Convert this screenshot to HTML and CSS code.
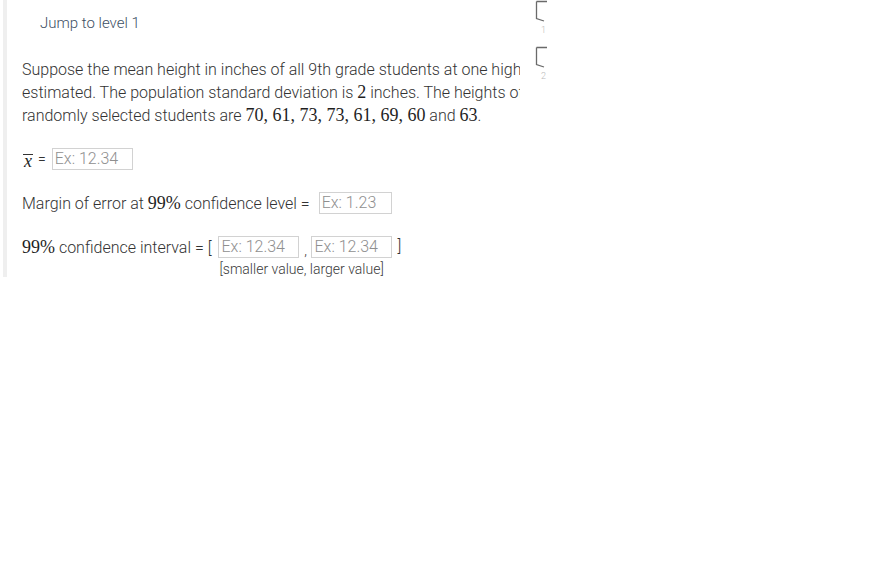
FILE: index.html
```html
<!DOCTYPE html>
<html>
<head>
<meta charset="utf-8">
<link rel="stylesheet" href="styles.css">
</head>
<body>
<div class="page">
  <div class="panel">
    <div class="jump">Jump to level 1</div>
    <div class="question">
      <div class="line">Suppose the mean height in inches of all 9th grade students at one high school is</div>
      <div class="line">estimated. The population standard deviation is <span class="m">2</span> inches. The heights of 8</div>
      <div class="line">randomly selected students are <span class="m">70, 61, 73, 73, 61, 69, 60</span> and <span class="m">63</span>.</div>
    </div>
    <div class="row r1">
      <span class="xbar">x</span><span class="eq">=</span><span class="input w81">Ex: 12.34</span>
    </div>
    <div class="row">
      <span>Margin of error at <span class="m">99%</span> confidence level =</span><span class="input w73 ml8">Ex: 1.23</span>
    </div>
    <div class="row ci">
      <span><span class="m">99%</span> confidence interval = [</span>
      <div class="pair">
        <div class="inputs">
          <span class="input w81">Ex: 12.34</span><span class="comma">,</span><span class="input w81">Ex: 12.34</span><span class="close">]</span>
        </div>
        <div class="hint">[smaller value, larger value]</div>
      </div>
    </div>
  </div>
  <div class="levels">
    <div class="level">
      <svg width="14" height="24" viewBox="0 0 14 24"><path d="M1.5 1.5 H14 M1.5 1.5 V18.5 L9 21" fill="none" stroke="#6a6a6a" stroke-width="1.3"/></svg>
      <span class="lnum">1</span>
    </div>
    <div class="level">
      <svg width="14" height="24" viewBox="0 0 14 24"><path d="M1.5 1.5 H14 M1.5 1.5 V18.5 L9 21" fill="none" stroke="#6a6a6a" stroke-width="1.3"/></svg>
      <span class="lnum">2</span>
    </div>
  </div>
</div>
</body>
</html>
```
FILE: styles.css
```css
html, body {
  margin: 0;
  padding: 0;
  background: #fff;
}
body {
  font-family: Roboto, "Liberation Sans", sans-serif;
  font-weight: 300;
  color: #333;
}
.page {
  display: flex;
  align-items: flex-start;
}
.panel {
  margin-left: 3px;
  border-left: 4px solid #efefef;
  width: 498px;
  padding: 13px 0 0 15px;
  white-space: nowrap;
}
.jump {
  font-size: 15px;
  font-weight: 300;
  line-height: 20px;
  color: #3d4f63;
  padding-left: 18px;
}
.question {
  margin-top: 26px;
  font-size: 16px;
  line-height: 22px;
  width: 498px;
  overflow: hidden;
}
.line {
  white-space: nowrap;
}
.m {
  font-family: "Liberation Serif", "DejaVu Serif", serif;
  font-size: 18px;
  font-weight: 400;
  color: #1f1f1f;
}
.row {
  display: flex;
  align-items: center;
  font-size: 16px;
  line-height: 22px;
  height: 22px;
  margin-top: 22px;
}
.row.r1 {
  margin-top: 21px;
}
.xbar {
  display: inline-block;
  font-family: "Liberation Serif", "DejaVu Serif", serif;
  font-style: italic;
  font-size: 18px;
  line-height: 11px;
  color: #1f1f1f;
  border-top: 1px solid #333;
  padding: 1px 1px 0 1px;
  margin-left: 1px;
  margin-top: 2px;
}
.eq {
  margin: 0 6px 0 5px;
  font-size: 14px;
}
.input {
  display: inline-block;
  box-sizing: border-box;
  height: 22px;
  border: 1px solid #d2d2d2;
  color: #8f8f8f;
  font-size: 16px;
  line-height: 20px;
  padding-left: 2px;
}
.w81 { width: 81px; }
.w73 { width: 73px; }
.ml8 { margin-left: 9px; }
.row.ci {
  align-items: flex-start;
  height: auto;
}
.pair {
  display: flex;
  flex-direction: column;
  margin-left: 7px;
}
.inputs {
  display: flex;
  align-items: flex-start;
  height: 22px;
}
.comma {
  width: 12px;
  height: 22px;
  text-align: center;
  line-height: 28px;
  font-size: 14px;
}
.close {
  margin-left: 5px;
  line-height: 20px;
}
.hint {
  font-size: 14px;
  line-height: 16px;
  margin-top: 3px;
  padding-left: 1px;
  color: #3a3a3a;
}
.levels {
  margin-left: 15px;
  width: 12px;
  overflow: hidden;
}
.level {
  display: flex;
  flex-direction: column;
  height: 46px;
}
.level svg {
  display: block;
}
.lnum {
  font-size: 9px;
  color: #bbb;
  padding-left: 6px;
  line-height: 12px;
}
```
